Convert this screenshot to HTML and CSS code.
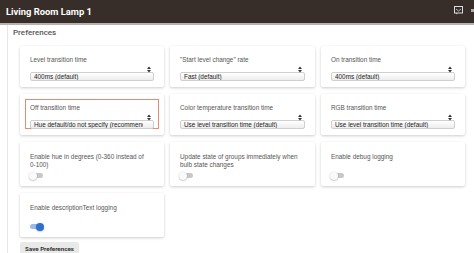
FILE: index.html
```html
<!DOCTYPE html>
<html lang="en">
<head>
    <meta charset="UTF-8">
    <title>Living Room Lamp 1</title>
    <link rel="stylesheet" href="styles.css">
</head>
<body>
    <div class="topbar">
        <span class="device-name">Living Room Lamp 1</span>
        <div class="top-icons">
            <svg width="9" height="9" viewBox="0 0 9 9">
                <rect x="0.5" y="0.5" width="8" height="6.5" fill="none" stroke="#ddd" stroke-width="1"/>
                <path d="M2 3 L4.5 5 L7 3" fill="none" stroke="#ddd" stroke-width="0.8"/>
                <path d="M2 7 L2 8.5 L3.5 7" fill="#ddd"/>
            </svg>
            <span class="more-dot"></span>
        </div>
    </div>

    <div class="panel">
        <div class="panel-title">Preferences</div>

        <div class="pref-grid">
            <div class="card">
                <label>Level transition time</label>
                <div class="select-wrap">
                    <select><option>400ms (default)</option></select>
                    <svg class="arrows" width="4" height="7" viewBox="0 0 4 7"><path d="M0 3 L2 0.5 L4 3 Z M0 4 L2 6.5 L4 4 Z" fill="#333"/></svg>
                </div>
            </div>
            <div class="card">
                <label>"Start level change" rate</label>
                <div class="select-wrap">
                    <select><option>Fast (default)</option></select>
                    <svg class="arrows" width="4" height="7" viewBox="0 0 4 7"><path d="M0 3 L2 0.5 L4 3 Z M0 4 L2 6.5 L4 4 Z" fill="#333"/></svg>
                </div>
            </div>
            <div class="card">
                <label>On transition time</label>
                <div class="select-wrap">
                    <select><option>400ms (default)</option></select>
                    <svg class="arrows" width="4" height="7" viewBox="0 0 4 7"><path d="M0 3 L2 0.5 L4 3 Z M0 4 L2 6.5 L4 4 Z" fill="#333"/></svg>
                </div>
            </div>

            <div class="card">
                <div class="highlight">
                    <label>Off transition time</label>
                    <div class="select-wrap">
                        <select><option>Hue default/do not specify (recommended)</option></select>
                        <svg class="arrows" width="4" height="7" viewBox="0 0 4 7"><path d="M0 3 L2 0.5 L4 3 Z M0 4 L2 6.5 L4 4 Z" fill="#333"/></svg>
                    </div>
                </div>
            </div>
            <div class="card">
                <label>Color temperature transition time</label>
                <div class="select-wrap">
                    <select><option>Use level transition time (default)</option></select>
                    <svg class="arrows" width="4" height="7" viewBox="0 0 4 7"><path d="M0 3 L2 0.5 L4 3 Z M0 4 L2 6.5 L4 4 Z" fill="#333"/></svg>
                </div>
            </div>
            <div class="card">
                <label>RGB transition time</label>
                <div class="select-wrap">
                    <select><option>Use level transition time (default)</option></select>
                    <svg class="arrows" width="4" height="7" viewBox="0 0 4 7"><path d="M0 3 L2 0.5 L4 3 Z M0 4 L2 6.5 L4 4 Z" fill="#333"/></svg>
                </div>
            </div>

            <div class="card card-toggle">
                <label>Enable hue in degrees (0-360 instead of 0-100)</label>
                <span class="toggle"><span class="knob"></span></span>
            </div>
            <div class="card card-toggle">
                <label>Update state of groups immediately when bulb state changes</label>
                <span class="toggle"><span class="knob"></span></span>
            </div>
            <div class="card card-toggle">
                <label>Enable debug logging</label>
                <span class="toggle"><span class="knob"></span></span>
            </div>

            <div class="card card-toggle">
                <label>Enable descriptionText logging</label>
                <span class="toggle on"><span class="knob"></span></span>
            </div>
        </div>

        <button class="save-btn">Save Preferences</button>
    </div>
</body>
</html>
```

FILE: styles.css
```css
body {
    margin: 0;
    padding: 0;
    background-color: #fff;
    font-family: "Liberation Sans", Arial, sans-serif;
    overflow: hidden;
}
.topbar {
    height: 23px;
    background-color: #372d29;
    border-bottom: 2px solid #b5b2b0;
    display: flex;
    align-items: center;
    justify-content: space-between;
    padding-left: 6px;
}
.device-name {
    font-family: Roboto, sans-serif;
    font-weight: bold;
    font-size: 9.4px;
    color: #fff;
    margin-top: -1px;
}
.top-icons {
    display: flex;
    align-items: center;
    gap: 8px;
    margin-top: -2px;
}
.more-dot {
    width: 3px;
    height: 3px;
    background-color: #aaa;
}
.panel {
    margin-left: 7px;
    border-left: 1px solid #e6e6e6;
    padding-left: 11px;
    padding-right: 10px;
}
.panel-title {
    font-family: Roboto, sans-serif;
    font-size: 8px;
    font-weight: 500;
    color: #555;
    margin-left: -6px;
    padding-top: 3px;
    height: 18px;
}
.pref-grid {
    display: grid;
    grid-template-columns: 144px 145px 144px;
    column-gap: 6px;
    row-gap: 7px;
    margin-left: 1px;
}
.card {
    background-color: #fff;
    box-shadow: 0 1px 3px rgba(0, 0, 0, 0.2);
    border-radius: 2px;
    padding: 10px 10px 13px 10px;
    height: 18px;
    display: flex;
    flex-direction: column;
    gap: 1px;
}
.card label {
    font-size: 6.4px;
    color: #555;
    line-height: 8px;
}
.select-wrap {
    position: relative;
    height: 9px;
}
.select-wrap select {
    appearance: none;
    -webkit-appearance: none;
    width: 100%;
    height: 9px;
    margin: 0;
    padding: 0 10px 0 3px;
    border: 1px solid #cfcfcf;
    border-radius: 2px;
    background: linear-gradient(#ffffff, #ededed);
    font-family: "Liberation Sans", Arial, sans-serif;
    font-size: 6.4px;
    line-height: 7px;
    color: #222;
    box-sizing: border-box;
}
.arrows {
    position: absolute;
    right: 3px;
    top: 1px;
}
.highlight {
    margin: -5px -5px -7px -5px;
    border: 1px solid #e88a78;
    padding: 4px 4px 6px 4px;
    display: flex;
    flex-direction: column;
    gap: 1px;
}
.card-toggle {
    height: auto;
    padding: 11px 10px 8px 10px;
    gap: 0;
    min-height: 25px;
}
.card-toggle label {
    flex: 1;
    padding-right: 5px;
}
.toggle {
    position: relative;
    display: block;
    width: 13px;
    height: 5px;
    margin-top: 4px;
    border-radius: 3px;
    background-color: #c8c8c8;
}
.knob {
    position: absolute;
    left: -1px;
    top: -1.5px;
    width: 8px;
    height: 8px;
    border-radius: 50%;
    background-color: #fafafa;
    box-shadow: 0 0.5px 1.5px rgba(0, 0, 0, 0.35);
}
.toggle.on {
    background-color: #9bbbe8;
}
.toggle.on .knob {
    left: 6px;
    background-color: #2f6fd0;
}
.save-btn {
    margin-top: 5px;
    margin-left: 1px;
    width: 59px;
    height: 14px;
    border: none;
    border-radius: 2px;
    background-color: #e9e9e9;
    font-family: Roboto, sans-serif;
    font-weight: bold;
    font-size: 6.2px;
    color: #333;
    padding: 0;
}
```
